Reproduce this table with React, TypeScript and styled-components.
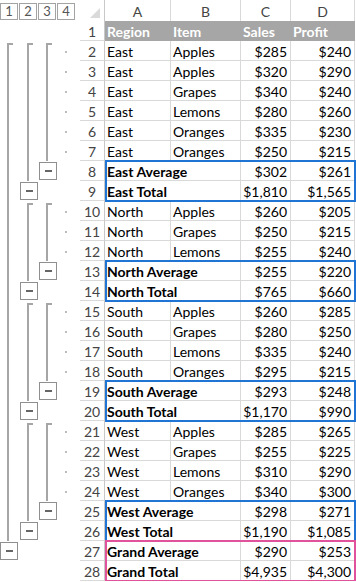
import React from 'react';
import styled, { createGlobalStyle } from 'styled-components';

const GlobalStyle = createGlobalStyle`
  html, body {
    margin: 0;
    padding: 0;
    background: #fff;
  }
  body {
    font-family: Lato, "Liberation Sans", sans-serif;
  }
`;

const GRID = '#d9d9d9';
const OUTLINE = '#a6a6a6';
const COLS = [66, 70, 50, 64];

const Sheet = styled.div`
  width: 355px;
  display: flex;
  flex-direction: column;
  font-size: 14px;
  color: #000;
`;

const Row = styled.div<{ $tall?: boolean }>`
  display: flex;
  height: ${(p) => (p.$tall ? 21 : 20)}px;
`;

const Gutter = styled.div`
  width: 80px;
  flex: none;
  display: flex;
`;

const Levels = styled.div`
  display: flex;
  gap: 1px;
  padding-top: 3px;
`;

const LevelButton = styled.div`
  width: 18px;
  height: 17px;
  box-sizing: border-box;
  border: 1px solid #a3a3a3;
  color: #555;
  font-size: 13px;
  line-height: 15px;
  text-align: center;
`;

const Slot = styled.div`
  width: 19px;
  height: 100%;
  flex: none;
`;

const MinusBox = styled.div<{ $first?: boolean }>`
  width: 18px;
  height: 18px;
  margin: 1px 0 0 ${(p) => (p.$first ? 0 : 1)}px;
  box-sizing: border-box;
  border: 1px solid #8f8f8f;
  background: #fff;
  display: flex;
  align-items: center;
  justify-content: center;

  &::before {
    content: '';
    width: 7px;
    height: 2px;
    background: #666;
  }
`;

const Corner = styled.div`
  width: 25px;
  flex: none;
  box-sizing: border-box;
  border-right: 1px solid #c8c8c8;
  display: flex;
  align-items: flex-end;
  justify-content: flex-end;
  padding: 0 4px 3px 0;
`;

const Triangle = styled.div`
  width: 10px;
  height: 10px;
  background: #dadada;
  clip-path: polygon(100% 0, 100% 100%, 0 100%);
`;

const ColLetter = styled.div<{ $w: number }>`
  width: ${(p) => p.$w}px;
  flex: none;
  box-sizing: border-box;
  border-right: 1px solid ${GRID};
  text-align: center;
  color: #444;
  padding-top: 4px;
  line-height: 16px;
`;

const RowNum = styled.div`
  width: 25px;
  flex: none;
  box-sizing: border-box;
  border-right: 1px solid #c8c8c8;
  border-bottom: 1px solid ${GRID};
  text-align: center;
  color: #444;
  padding-top: 3px;
  line-height: 16px;
`;

const Cell = styled.div<{ $w: number; $right?: boolean; $bold?: boolean; $head?: boolean }>`
  width: ${(p) => p.$w}px;
  flex: none;
  box-sizing: border-box;
  border-right: 1px solid ${(p) => (p.$head ? '#a6a6a6' : GRID)};
  border-bottom: 1px solid ${(p) => (p.$head ? '#a6a6a6' : GRID)};
  background: ${(p) => (p.$head ? '#a6a6a6' : 'transparent')};
  color: ${(p) => (p.$head ? '#fff' : '#000')};
  font-weight: ${(p) => (p.$bold || p.$head ? 700 : 400)};
  text-align: ${(p) => (p.$right ? 'right' : 'left')};
  padding: 3px 3px 0 ${(p) => (p.$right ? 0 : 2)}px;
  line-height: 16px;
  white-space: nowrap;
`;

const Box = styled.div<{ $color: string }>`
  position: relative;

  &::after {
    content: '';
    position: absolute;
    left: 105px;
    right: -1px;
    top: -1px;
    bottom: -1px;
    border: 2px solid ${(p) => p.$color};
    pointer-events: none;
    z-index: 1;
  }
`;

type Line = {
  n: number;
  a: string;
  b?: string;
  c: string;
  d: string;
  bold?: boolean;
  marks: string;
};

type Block = { box?: string; rows: Line[] };

const BLUE = '#1f74d4';
const PINK = '#e0529c';

const blocks: Block[] = [
  {
    rows: [
      { n: 2, a: 'East', b: 'Apples', c: '$285', d: '$240', marks: 'sss.' },
      { n: 3, a: 'East', b: 'Apples', c: '$320', d: '$290', marks: '|||.' },
      { n: 4, a: 'East', b: 'Grapes', c: '$340', d: '$240', marks: '|||.' },
      { n: 5, a: 'East', b: 'Lemons', c: '$280', d: '$260', marks: '|||.' },
      { n: 6, a: 'East', b: 'Oranges', c: '$335', d: '$230', marks: '|||.' },
      { n: 7, a: 'East', b: 'Oranges', c: '$250', d: '$215', marks: '|||.' },
    ],
  },
  {
    box: BLUE,
    rows: [
      { n: 8, a: 'East Average', c: '$302', d: '$261', bold: true, marks: '||m ' },
      { n: 9, a: 'East Total', c: '$1,810', d: '$1,565', bold: true, marks: '|m  ' },
    ],
  },
  {
    rows: [
      { n: 10, a: 'North', b: 'Apples', c: '$260', d: '$205', marks: '|ss.' },
      { n: 11, a: 'North', b: 'Grapes', c: '$250', d: '$215', marks: '|||.' },
      { n: 12, a: 'North', b: 'Lemons', c: '$255', d: '$240', marks: '|||.' },
    ],
  },
  {
    box: BLUE,
    rows: [
      { n: 13, a: 'North Average', c: '$255', d: '$220', bold: true, marks: '||m ' },
      { n: 14, a: 'North Total', c: '$765', d: '$660', bold: true, marks: '|m  ' },
    ],
  },
  {
    rows: [
      { n: 15, a: 'South', b: 'Apples', c: '$260', d: '$285', marks: '|ss.' },
      { n: 16, a: 'South', b: 'Grapes', c: '$280', d: '$250', marks: '|||.' },
      { n: 17, a: 'South', b: 'Lemons', c: '$335', d: '$240', marks: '|||.' },
      { n: 18, a: 'South', b: 'Oranges', c: '$295', d: '$215', marks: '|||.' },
    ],
  },
  {
    box: BLUE,
    rows: [
      { n: 19, a: 'South Average', c: '$293', d: '$248', bold: true, marks: '||m ' },
      { n: 20, a: 'South Total', c: '$1,170', d: '$990', bold: true, marks: '|m  ' },
    ],
  },
  {
    rows: [
      { n: 21, a: 'West', b: 'Apples', c: '$285', d: '$265', marks: '|ss.' },
      { n: 22, a: 'West', b: 'Grapes', c: '$255', d: '$225', marks: '|||.' },
      { n: 23, a: 'West', b: 'Lemons', c: '$310', d: '$290', marks: '|||.' },
      { n: 24, a: 'West', b: 'Oranges', c: '$340', d: '$300', marks: '|||.' },
    ],
  },
  {
    box: BLUE,
    rows: [
      { n: 25, a: 'West Average', c: '$298', d: '$271', bold: true, marks: '||m ' },
      { n: 26, a: 'West Total', c: '$1,190', d: '$1,085', bold: true, marks: '|m  ' },
    ],
  },
  {
    box: PINK,
    rows: [
      { n: 27, a: 'Grand Average', c: '$290', d: '$253', bold: true, marks: 'm   ' },
      { n: 28, a: 'Grand Total', c: '$4,935', d: '$4,300', bold: true, marks: '    ' },
    ],
  },
];

function Mark({ code, level }: { code: string; level: number }) {
  const x = level === 0 ? 7 : 8;
  if (code === 'm') {
    return (
      <Slot>
        <MinusBox $first={level === 0} />
      </Slot>
    );
  }
  let shape: React.ReactNode = null;
  if (code === 's') shape = <path d={`M${x} 2H${x + 6}V4H${x + 2}V20H${x}Z`} fill={OUTLINE} />;
  if (code === '|') shape = <rect x={x} y={0} width={2} height={20} fill={OUTLINE} />;
  if (code === '.') shape = <rect x={8} y={10} width={2} height={2} fill="#bdbdbd" />;
  return (
    <Slot>
      {shape && (
        <svg width="19" height="20" viewBox="0 0 19 20">
          {shape}
        </svg>
      )}
    </Slot>
  );
}

function DataRow({ row }: { row: Line }) {
  return (
    <Row>
      <Gutter>
        {row.marks.split('').map((m, i) => (
          <Mark key={i} code={m} level={i} />
        ))}
      </Gutter>
      <RowNum>{row.n}</RowNum>
      {row.bold ? (
        <Cell $w={COLS[0] + COLS[1]} $bold>
          {row.a}
        </Cell>
      ) : (
        <>
          <Cell $w={COLS[0]}>{row.a}</Cell>
          <Cell $w={COLS[1]}>{row.b}</Cell>
        </>
      )}
      <Cell $w={COLS[2]} $right>
        {row.c}
      </Cell>
      <Cell $w={COLS[3]} $right>
        {row.d}
      </Cell>
    </Row>
  );
}

export default function App() {
  return (
    <>
      <GlobalStyle />
      <Sheet>
        <Row $tall>
          <Gutter>
            <Levels>
              {[1, 2, 3, 4].map((l) => (
                <LevelButton key={l}>{l}</LevelButton>
              ))}
            </Levels>
          </Gutter>
          <Corner>
            <Triangle />
          </Corner>
          {['A', 'B', 'C', 'D'].map((l, i) => (
            <ColLetter key={l} $w={COLS[i]}>
              {l}
            </ColLetter>
          ))}
        </Row>
        <Row>
          <Gutter />
          <RowNum>1</RowNum>
          <Cell $w={COLS[0]} $head>Region</Cell>
          <Cell $w={COLS[1]} $head>Item</Cell>
          <Cell $w={COLS[2]} $head>Sales</Cell>
          <Cell $w={COLS[3]} $head>Profit</Cell>
        </Row>
        {blocks.map((block, bi) => {
          const rows = block.rows.map((r) => <DataRow key={r.n} row={r} />);
          return block.box ? (
            <Box key={bi} $color={block.box}>
              {rows}
            </Box>
          ) : (
            <React.Fragment key={bi}>{rows}</React.Fragment>
          );
        })}
      </Sheet>
    </>
  );
}
